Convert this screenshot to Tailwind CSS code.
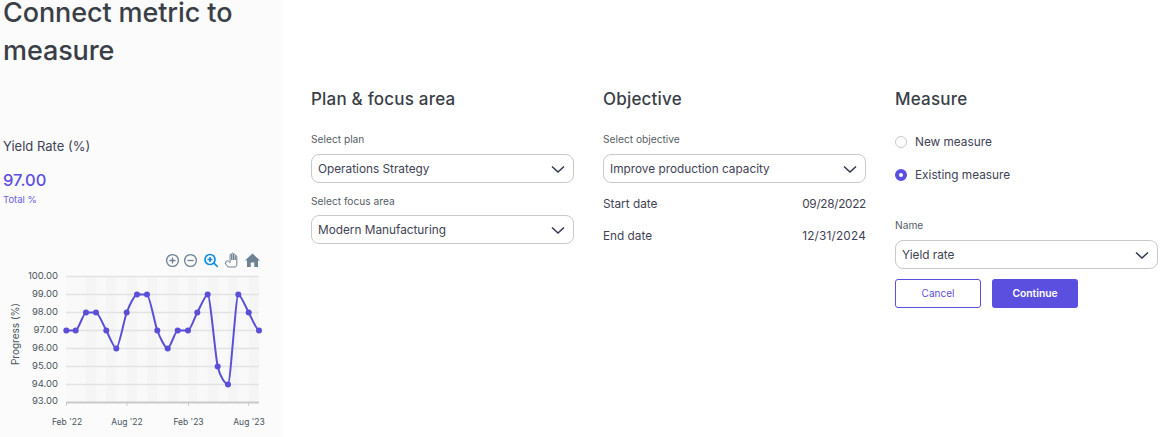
<!DOCTYPE html>
<html><head><meta charset="utf-8"><script src="https://cdn.jsdelivr.net/npm/@tailwindcss/browser@4"></script></head>
<body class="bg-white font-['Inter',sans-serif] text-[#3f4254]">
<div class="flex h-[437px] w-[1161px] overflow-hidden">
<aside class="flex w-[282px] shrink-0 flex-col bg-[#fbfbfb]">
<h1 class="mt-[-6px] pl-[3px] text-[27px] leading-[38px] font-[450] tracking-[-0.1px] text-[#3a3f47]">Connect metric to<br>measure</h1>
<p class="mt-[66px] pl-[3px] text-[13px] leading-[20px] text-[#3f4254]">Yield Rate (%)</p>
<p class="mt-[12px] pl-[3px] text-[16.500px] leading-[24px] font-medium text-[#5b4fe0]">97.00</p>
<p class="mt-[1px] pl-[3px] text-[9.500px] leading-[14px] text-[#6a5fe6]">Total %</p>
<div class="mt-[43px] flex h-[20px] shrink-0 items-center pl-[165px]">
<svg width="100" height="20" viewBox="0 0 100 20" fill="none">
<g stroke="#6e8192" stroke-width="1.300"><circle cx="7.500" cy="10.500" r="5.900"/><path d="M4.500 10.500h6M7.500 7.500v6"/><circle cx="25.500" cy="10.500" r="5.900"/><path d="M22.500 10.500h6"/></g>
<g stroke="#0d8ee9" stroke-width="1.700"><circle cx="45" cy="9.500" r="5"/><path d="M42.500 9.500h5M45 7v5M49 13.200l3.800 3.800"/></g>
<path d="M60 13l3 4h7c1.500 0 1.800-2 1.800-3V6.500c0-1.200-1.600-1.200-1.600 0V10V5c0-1.200-1.700-1.200-1.700 0v5V4c0-1.200-1.700-1.200-1.700 0v6V5c0-1.200-1.700-1.200-1.700 0v7.500l-2-1.500c-1.200-.9-2.700.4-2.100 2z" stroke="#6e8192" stroke-width="1"/>
<path d="M87.500 3.500l7.500 7h-2v6.500h-3.700v-4.500h-3.600V17H82v-6.500h-2z" fill="#6e8192"/>
</svg>
</div>
<svg class="mt-[-5px] block shrink-0" width="282" height="172" viewBox="0 265 282 172" font-family="Inter, sans-serif">
<rect x="66" y="276" width="193" height="126" fill="#f9f9f9"/>
<g fill="#f5f5f5"><rect x="86" y="276" width="10.300" height="126"/><rect x="106.300" y="276" width="10" height="126"/><rect x="126.700" y="276" width="10.300" height="126"/><rect x="147" y="276" width="10.300" height="126"/><rect x="167.700" y="276" width="10" height="126"/><rect x="188" y="276" width="9.300" height="126"/><rect x="207.700" y="276" width="10" height="126"/><rect x="228" y="276" width="10.300" height="126"/><rect x="248.700" y="276" width="10.300" height="126"/></g>
<path d="M66 276.500h193M66 294.500h193M66 312.500h193M66 330.500h193M66 348.500h193M66 366.500h193M66 384.500h193" stroke="#e3e3e3" stroke-width="1.300"/>
<path d="M66 402.500h193" stroke="#c9c9c9" stroke-width="2"/>
<path d="M66.500 403v3M127 403v3M188.500 403v3M248.500 403v3" stroke="#cfcfcf"/>
<g fill="#4a5560" font-size="9.500" text-anchor="end"><text x="58" y="279">100.00</text><text x="58" y="297">99.00</text><text x="58" y="315">98.00</text><text x="58" y="333">97.00</text><text x="58" y="351">96.00</text><text x="58" y="369">95.00</text><text x="58" y="387">94.00</text><text x="58" y="404">93.00</text></g>
<text transform="translate(19 334) rotate(-90)" font-size="10" fill="#4a5560" text-anchor="middle">Progress (%)</text>
<g fill="#4a5560" font-size="8.500" text-anchor="middle"><text x="67" y="425">Feb '22</text><text x="127" y="425">Aug '22</text><text x="188.500" y="425">Feb '23</text><text x="249" y="425">Aug '23</text></g>
<path fill="none" stroke="#5b4fd8" stroke-width="2" d="M66.300 330.500L75.700 330.500C78.100 330.500 83.600 312.500 86 312.500L96 312.500C98.400 312.500 103.900 326.200 106.300 330.500C108.700 334.800 113.900 348.500 116.300 348.500C118.700 348.500 124.300 319 126.700 312.500C129.100 306 134.600 294.500 137 294.500L147 294.500C149.400 294.500 154.900 324 157.300 330.500C159.700 337 165.300 348.500 167.700 348.500C170.100 348.500 175.300 330.500 177.700 330.500L188 330.500C190.400 330.500 194.900 316.800 197.300 312.500C199.700 308.200 205.300 294.500 207.700 294.500C210.100 294.500 215.300 355.700 217.700 366.500C220.100 377.300 225.600 384.500 228 384.500C230.400 384.500 235.900 294.500 238.300 294.500C240.700 294.500 246.300 308.200 248.700 312.500C251.100 316.800 256.600 330.500 259 330.500"/>
<g fill="#5b4fd8"><circle cx="66.300" cy="330.500" r="3"/><circle cx="75.700" cy="330.500" r="3"/><circle cx="86" cy="312.500" r="3"/><circle cx="96" cy="312.500" r="3"/><circle cx="106.300" cy="330.500" r="3"/><circle cx="116.300" cy="348.500" r="3"/><circle cx="126.700" cy="312.500" r="3"/><circle cx="137" cy="294.500" r="3"/><circle cx="147" cy="294.500" r="3"/><circle cx="157.300" cy="330.500" r="3"/><circle cx="167.700" cy="348.500" r="3"/><circle cx="177.700" cy="330.500" r="3"/><circle cx="188" cy="330.500" r="3"/><circle cx="197.300" cy="312.500" r="3"/><circle cx="207.700" cy="294.500" r="3"/><circle cx="217.700" cy="366.500" r="3"/><circle cx="228" cy="384.500" r="3"/><circle cx="238.300" cy="294.500" r="3"/><circle cx="248.700" cy="312.500" r="3"/><circle cx="259" cy="330.500" r="3"/></g>
</svg>
</aside>
<main class="flex gap-[29px] pl-[29px] pt-[87px]">
<section class="w-[263px]">
<h2 class="text-[17px] leading-[24px] font-[450] tracking-[0.2px] text-[#3a3f47]">Plan &amp; focus area</h2>
<p class="mt-[20px] text-[10.200px] leading-[16px] text-[#555c66]">Select plan</p>
<div class="mt-[7px] flex h-[29px] items-center justify-between rounded-[8px] border border-[#c9c9c9] bg-white pl-[6px] pr-[7px] text-[11.800px]"><span class="pt-[2px]">Operations Strategy</span><svg width="16" height="16" viewBox="0 0 16 16" fill="none" stroke="#2f3550" stroke-width="1.500"><path d="M2 5.500L8 11L14 5.500"/></svg></div>
<p class="mt-[10px] text-[10.200px] leading-[16px] text-[#555c66]">Select focus area</p>
<div class="mt-[6px] flex h-[29px] items-center justify-between rounded-[8px] border border-[#c9c9c9] bg-white pl-[6px] pr-[7px] text-[11.800px]"><span class="pt-[2px]">Modern Manufacturing</span><svg width="16" height="16" viewBox="0 0 16 16" fill="none" stroke="#2f3550" stroke-width="1.500"><path d="M2 5.500L8 11L14 5.500"/></svg></div>
</section>
<section class="w-[263px]">
<h2 class="text-[17px] leading-[24px] font-[450] tracking-[0.2px] text-[#3a3f47]">Objective</h2>
<p class="mt-[20px] text-[10.200px] leading-[16px] text-[#555c66]">Select objective</p>
<div class="mt-[7px] flex h-[29px] items-center justify-between rounded-[8px] border border-[#c9c9c9] bg-white pl-[6px] pr-[7px] text-[11.800px]"><span class="pt-[2px]">Improve production capacity</span><svg width="16" height="16" viewBox="0 0 16 16" fill="none" stroke="#2f3550" stroke-width="1.500"><path d="M2 5.500L8 11L14 5.500"/></svg></div>
<div class="mt-[12px] flex justify-between text-[11.800px] leading-[18px]"><span>Start date</span><span class="tracking-[-0.3px]">09/28/2022</span></div>
<div class="mt-[14px] flex justify-between text-[11.800px] leading-[18px]"><span>End date</span><span class="tracking-[0.2px]">12/31/2024</span></div>
</section>
<section class="w-[263px]">
<h2 class="text-[17px] leading-[24px] font-[450] tracking-[0.2px] text-[#3a3f47]">Measure</h2>
<div class="mt-[21px] flex items-center gap-[8px] text-[11.800px] leading-[20px]"><span class="size-[12px] rounded-full border border-[#c9c9c9] bg-white"></span>New measure</div>
<div class="mt-[13px] flex items-center gap-[8px] text-[11.800px] leading-[20px]"><span class="size-[12px] rounded-full border-[4px] border-[#5b4fe0] bg-white"></span>Existing measure</div>
<p class="mt-[32px] text-[10.200px] leading-[16px] text-[#555c66]">Name</p>
<div class="mt-[7px] flex h-[29px] items-center justify-between rounded-[8px] border border-[#c9c9c9] bg-white pl-[6px] pr-[7px] text-[11.800px]"><span class="pt-[2px]">Yield rate</span><svg width="16" height="16" viewBox="0 0 16 16" fill="none" stroke="#2f3550" stroke-width="1.500"><path d="M2 5.500L8 11L14 5.500"/></svg></div>
<div class="mt-[10px] flex gap-[11px]">
<button class="h-[29px] w-[86px] rounded-[3px] border border-[#5b4fe0] bg-white text-[10px] text-[#5b4fe0]">Cancel</button>
<button class="h-[29px] w-[86px] rounded-[3px] bg-[#5b4fe0] text-[10.300px] font-semibold text-white">Continue</button>
</div>
</section>
</main>
</div>
</body></html>
